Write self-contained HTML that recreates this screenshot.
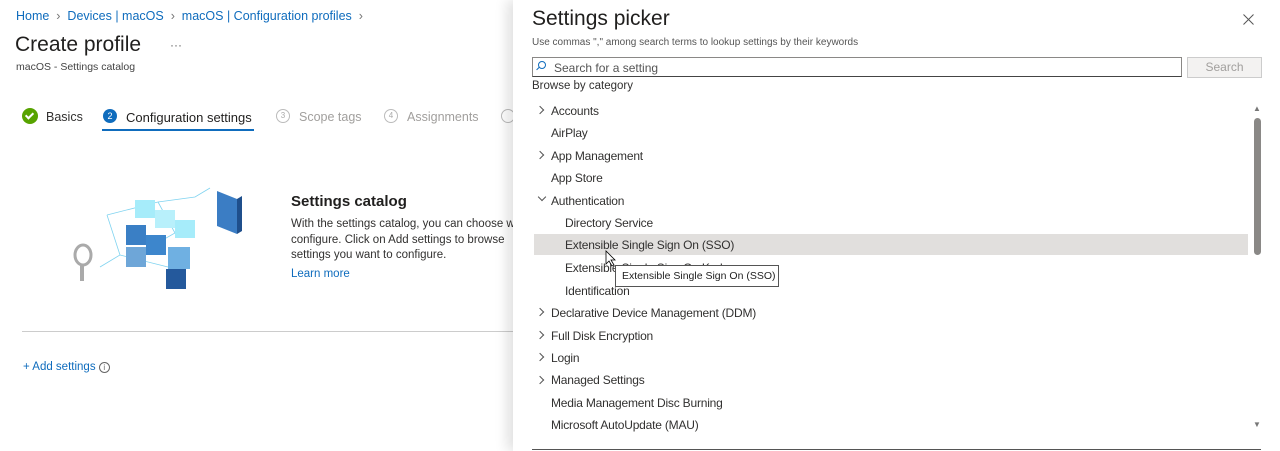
<!DOCTYPE html>
<html><head><meta charset="utf-8"><style>
*{margin:0;padding:0;box-sizing:border-box}
body{width:1280px;height:451px;overflow:hidden;background:#fff;font-family:"Liberation Sans",sans-serif;position:relative;color:#323130}
.a{position:absolute;white-space:nowrap}
.bl{color:#0f6cbd}
.row{position:absolute;font-size:12px;letter-spacing:-0.2px;color:#323130;white-space:nowrap}
.chev{position:absolute;width:6px;height:6px;border-right:1px solid #555;border-top:1px solid #555;transform:rotate(45deg)}
</style></head><body>
<div class="a bl" style="left:16px;top:9px;font-size:12.5px">Home <span style="color:#777">&nbsp;›&nbsp;</span> Devices | macOS <span style="color:#777">&nbsp;›&nbsp;</span> macOS | Configuration profiles <span style="color:#777">&nbsp;›</span></div>
<div class="a" style="left:15px;top:33px;font-size:21px;color:#201f1e">Create profile</div>
<div class="a" style="left:170px;top:38px;font-size:12px;color:#666">···</div>
<div class="a" style="left:16px;top:61px;font-size:10.5px;color:#444">macOS - Settings catalog</div>
<div class="a" style="left:22px;top:108px;width:16px;height:16px;border-radius:50%;background:#57a300"></div>
<div class="a" style="left:27px;top:111px;width:5px;height:8px;border-right:2px solid #fff;border-bottom:2px solid #fff;transform:rotate(45deg)"></div>
<div class="a" style="left:46px;top:110px;font-size:12.5px">Basics</div>
<div class="a" style="left:103px;top:109px;width:14px;height:14px;border-radius:50%;background:#0f6cbd;color:#fff;font-size:9px;text-align:center;line-height:14px">2</div>
<div class="a" style="left:126px;top:110px;font-size:13px;color:#201f1e">Configuration settings</div>
<div class="a" style="left:102px;top:129px;width:152px;height:2px;background:#0f6cbd"></div>
<div class="a" style="left:276px;top:109px;width:14px;height:14px;border-radius:50%;border:1px solid #bbb;color:#aaa;font-size:8px;text-align:center;line-height:12px">3</div>
<div class="a" style="left:299px;top:110px;font-size:12.5px;color:#a19f9d">Scope tags</div>
<div class="a" style="left:384px;top:109px;width:14px;height:14px;border-radius:50%;border:1px solid #bbb;color:#aaa;font-size:8px;text-align:center;line-height:12px">4</div>
<div class="a" style="left:407px;top:110px;font-size:12.5px;color:#a19f9d">Assignments</div>
<div class="a" style="left:501px;top:109px;width:14px;height:14px;border-radius:50%;border:1px solid #bbb"></div>
<svg class="a" style="left:70px;top:185px" width="180" height="105">
<g stroke="#7fd3f0" stroke-width="0.8" fill="none"><path d="M37 30L50 70L30 82M37 30L88 17L125 12L140 3M88 17L105 48L75 65M50 70L110 85"/></g>
<rect x="65" y="15" width="20" height="18" fill="#a6ecfa"/><rect x="85" y="25" width="20" height="18" fill="#b8f0fb"/><rect x="105" y="35" width="20" height="18" fill="#a6ecfa"/>
<rect x="56" y="40" width="20" height="20" fill="#3a7fc5"/><rect x="76" y="50" width="20" height="20" fill="#3d86cc"/><rect x="56" y="62" width="20" height="20" fill="#6ea6d8"/><rect x="98" y="62" width="22" height="22" fill="#6fb0e2"/><rect x="96" y="84" width="20" height="20" fill="#24599c"/>
<path d="M147 6l20 8v35l-20-8z" fill="#3b7dc4"/><path d="M167 14l5 -3v35l-5 3z" fill="#1f4f8c"/>
<ellipse cx="13" cy="70" rx="8" ry="10" fill="none" stroke="#aaa" stroke-width="3"/><rect x="10" y="80" width="4" height="16" fill="#aaa"/>
</svg>
<div class="a" style="left:291px;top:193px;font-size:15px;font-weight:bold;color:#201f1e">Settings catalog</div>
<div class="a" style="left:291px;top:217px;font-size:11.5px;line-height:15.5px;color:#323130">With the settings catalog, you can choose w<br>configure. Click on Add settings to browse<br>settings you want to configure.</div>
<div class="a bl" style="left:291px;top:268px;font-size:11.5px">Learn more</div>
<div class="a" style="left:22px;top:331px;width:495px;height:1px;background:#ccc"></div>
<div class="a bl" style="left:23px;top:361px;font-size:11.5px">+ Add settings <span style="display:inline-block;width:11px;height:11px;border:1px solid #666;border-radius:50%;font-size:8px;color:#666;text-align:center;line-height:9px;vertical-align:0">i</span></div>
<div class="a" style="left:513px;top:0;width:767px;height:451px;background:#fff;box-shadow:-6px 0 12px rgba(0,0,0,.12)"></div>
<div class="a" style="left:532px;top:7px;font-size:21px;color:#201f1e">Settings picker</div>
<svg class="a" style="left:1243px;top:14px" width="11" height="11"><path d="M0.5 0.5L10.5 10.5M10.5 0.5L0.5 10.5" stroke="#555" stroke-width="1"/></svg>
<div class="a" style="left:532px;top:37px;font-size:10px;color:#555">Use commas "," among search terms to lookup settings by their keywords</div>
<div class="a" style="left:532px;top:57px;width:650px;height:20px;border:1px solid #8a8886;border-bottom-color:#444"></div>
<div class="a" style="left:538px;top:61px;width:8px;height:8px;border:1px solid #0f6cbd;border-radius:50%"></div>
<div class="a" style="left:536px;top:68px;width:4px;height:1px;background:#0f6cbd;transform:rotate(-45deg)"></div>
<div class="a" style="left:554px;top:61px;font-size:12px;color:#555">Search for a setting</div>
<div class="a" style="left:1187px;top:57px;width:75px;height:21px;border:1px solid #ccc;background:#f3f2f1;color:#a19f9d;font-size:12px;text-align:center;line-height:19px">Search</div>
<div class="a" style="left:532px;top:80px;font-size:11.5px;color:#323130">Browse by category</div>
<div class="a" style="left:534px;top:234px;width:714px;height:21px;background:#e1dfdd"></div>
<div class="chev" style="left:537px;top:107px"></div><div class="row" style="left:551px;top:104px">Accounts</div>
<div class="row" style="left:551px;top:126px">AirPlay</div>
<div class="chev" style="left:537px;top:152px"></div><div class="row" style="left:551px;top:149px">App Management</div>
<div class="row" style="left:551px;top:171px">App Store</div>
<div class="chev" style="left:539px;top:194px;transform:rotate(135deg)"></div><div class="row" style="left:551px;top:194px">Authentication</div>
<div class="row" style="left:565px;top:216px">Directory Service</div>
<div class="row" style="left:565px;top:238px">Extensible Single Sign On (SSO)</div>
<div class="row" style="left:565px;top:261px">Extensible Single Sign On Kerberos</div>
<div class="row" style="left:565px;top:284px">Identification</div>
<div class="chev" style="left:537px;top:309px"></div><div class="row" style="left:551px;top:306px">Declarative Device Management (DDM)</div>
<div class="chev" style="left:537px;top:332px"></div><div class="row" style="left:551px;top:329px">Full Disk Encryption</div>
<div class="chev" style="left:537px;top:354px"></div><div class="row" style="left:551px;top:351px">Login</div>
<div class="chev" style="left:537px;top:377px"></div><div class="row" style="left:551px;top:373px">Managed Settings</div>
<div class="row" style="left:551px;top:396px">Media Management Disc Burning</div>
<div class="row" style="left:551px;top:418px">Microsoft AutoUpdate (MAU)</div>
<div class="a" style="left:615px;top:265px;width:164px;height:22px;background:#fff;border:1px solid #555;font-size:10.5px;line-height:20px;padding-left:6px;color:#222">Extensible Single Sign On (SSO)</div>
<svg class="a" style="left:605px;top:250px" width="12" height="18"><path d="M1 1v13l3-3 3 5 2-1-3-5h4z" fill="#fff" stroke="#000" stroke-width="0.8"/></svg>
<div class="a" style="left:1253px;top:104px;font-size:8px;color:#777">▲</div>
<div class="a" style="left:1254px;top:118px;width:7px;height:137px;border-radius:4px;background:#8a8886"></div>
<div class="a" style="left:1253px;top:420px;font-size:8px;color:#777">▼</div>
<div class="a" style="left:532px;top:449px;width:729px;height:1px;background:#555"></div>
</body></html>
